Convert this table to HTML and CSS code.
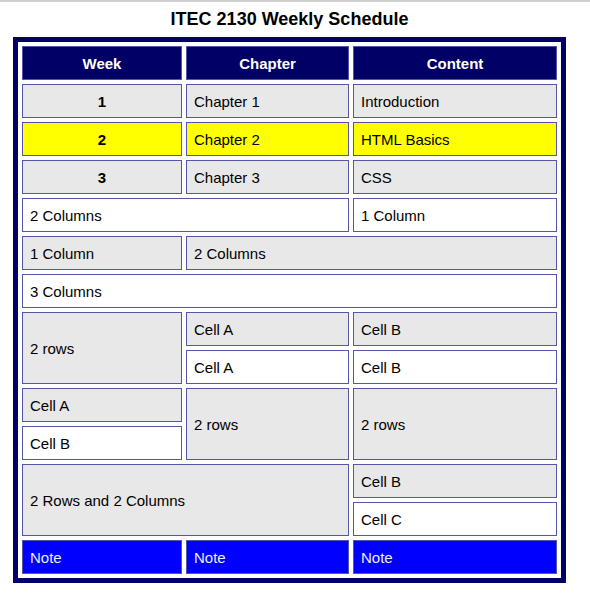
FILE: index.html
```html
<!DOCTYPE html>
<html>
<head>
<meta charset="utf-8">
<title>ITEC 2130 Weekly Schedule</title>
<link rel="stylesheet" href="styles.css">
</head>
<body>
<div class="topline"></div>
<div class="page">
  <h1 class="title">ITEC 2130 Weekly Schedule</h1>
  <table class="schedule">
    <colgroup>
      <col class="c1">
      <col class="c2">
      <col class="c3">
    </colgroup>
    <thead>
      <tr class="head">
        <th>Week</th>
        <th>Chapter</th>
        <th>Content</th>
      </tr>
    </thead>
    <tbody>
      <tr class="gray">
        <th class="wk">1</th>
        <td>Chapter 1</td>
        <td>Introduction</td>
      </tr>
      <tr class="yellow">
        <th class="wk">2</th>
        <td>Chapter 2</td>
        <td>HTML Basics</td>
      </tr>
      <tr class="gray">
        <th class="wk">3</th>
        <td>Chapter 3</td>
        <td>CSS</td>
      </tr>
      <tr class="white">
        <td colspan="2">2 Columns</td>
        <td>1 Column</td>
      </tr>
      <tr class="gray">
        <td>1 Column</td>
        <td colspan="2">2 Columns</td>
      </tr>
      <tr class="white">
        <td colspan="3">3 Columns</td>
      </tr>
      <tr class="gray">
        <td rowspan="2">2 rows</td>
        <td>Cell A</td>
        <td>Cell B</td>
      </tr>
      <tr class="white">
        <td>Cell A</td>
        <td>Cell B</td>
      </tr>
      <tr class="gray">
        <td>Cell A</td>
        <td rowspan="2">2 rows</td>
        <td rowspan="2">2 rows</td>
      </tr>
      <tr class="white">
        <td>Cell B</td>
      </tr>
      <tr class="gray">
        <td rowspan="2" colspan="2">2 Rows and 2 Columns</td>
        <td>Cell B</td>
      </tr>
      <tr class="white">
        <td>Cell C</td>
      </tr>
      <tr class="note">
        <td>Note</td>
        <td>Note</td>
        <td>Note</td>
      </tr>
    </tbody>
  </table>
</div>
</body>
</html>
```
FILE: styles.css
```css
html, body {
  margin: 0;
  padding: 0;
  background: #ffffff;
}

body {
  font-family: "Liberation Sans", Arial, sans-serif;
  color: #000000;
}

.topline {
  height: 2px;
  background: #cfcfcf;
}

.page {
  width: 579px;
}

.title {
  margin: 6px 0 0 0;
  font-size: 18px;
  line-height: 22px;
  font-weight: bold;
  text-align: center;
}

.schedule {
  margin: 7px auto 0 auto;
  width: 553px;
  table-layout: fixed;
  border-collapse: separate;
  border-spacing: 4px;
  border: 5px solid #000066;
  font-size: 15px;
}

.c1 { width: 160px; }
.c2 { width: 163px; }
.c3 { width: 204px; }

.schedule th,
.schedule td {
  height: 32px;
  padding: 0 7px;
  border: 1px solid #5555aa;
  vertical-align: middle;
  text-align: left;
  font-weight: normal;
  line-height: 17px;
}

.schedule .head th {
  height: 32px;
  background: #000066;
  color: #ffffff;
  font-weight: bold;
  text-align: center;
}

.schedule th.wk {
  font-weight: bold;
  text-align: center;
}

.gray th,
.gray td {
  background: #e8e8e8;
}

.white th,
.white td {
  background: #ffffff;
}

.yellow th,
.yellow td {
  background: #ffff00;
}

.note td {
  background: #0000ff;
  color: #eeeeff;
}
```
